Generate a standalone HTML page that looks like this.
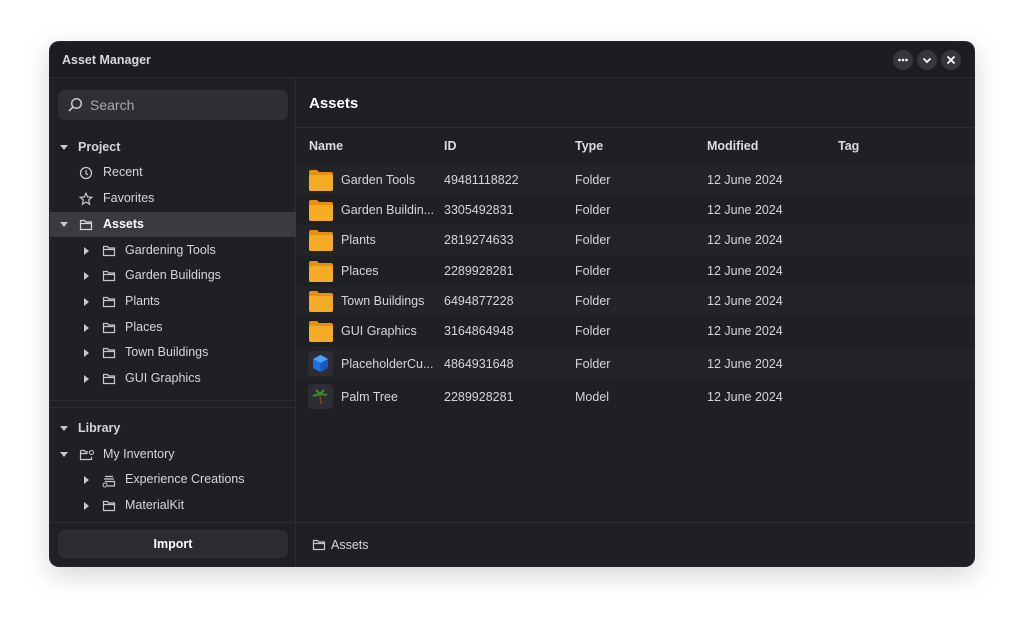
<!DOCTYPE html>
<html><head><meta charset="utf-8"><style>
*{box-sizing:border-box;margin:0;padding:0}
body{width:1024px;height:625px;background:#fff;font-family:"Liberation Sans",sans-serif;position:relative;overflow:hidden}
.win{position:absolute;left:50px;top:42px;width:924px;height:524px;background:#1f2023;border-radius:9px;overflow:hidden;box-shadow:0 8px 28px rgba(0,0,0,.18),0 0 0 1px #2a2b2f}
.title{position:absolute;left:0;top:0;width:924px;height:36px;background:#1c1d20;border-bottom:1px solid #2c2d31;color:#d8d8da;font-size:12.5px;font-weight:bold;padding:11px 0 0 12px}
.tb{position:absolute;top:8px;width:20px;height:20px;border-radius:10px;background:#36373b}
.side{position:absolute;left:0;top:37px;width:246px;height:487px;border-right:1px solid #2c2d31}
.search{position:absolute;left:8px;top:11px;width:230px;height:30px;border-radius:7px;background:#2e3035;color:#a8a9ad;font-size:14px;padding:7px 0 0 32px}
.it{position:absolute;left:0;width:246px;height:25px;color:#d6d6d8;font-size:12.5px;line-height:25px}
.it.sel{background:#3a3b3f;color:#fff;font-weight:bold}
.tri{position:absolute;width:0;height:0}
.td{border-left:4px solid transparent;border-right:4px solid transparent;border-top:5px solid #c8c8ca;top:10px}
.tr{border-top:4px solid transparent;border-bottom:4px solid transparent;border-left:5px solid #c8c8ca;top:9px}
.ic{position:absolute;top:6px}
.hdr{position:absolute;left:246px;top:37px;width:678px;height:49px;border-bottom:1px solid #2c2d31;color:#fff;font-size:15px;font-weight:bold;padding:16px 0 0 13px}
.col{position:absolute;top:97px;color:#dcdcde;font-size:12.5px;font-weight:bold}
.row{position:absolute;left:246px;width:678px;color:#d6d6d8;font-size:12.5px}
.row span{position:absolute}
.foot{position:absolute;top:480px;height:1px;background:#2c2d31}
</style></head><body>
<div class="win">
<div class="title">Asset Manager</div>
<div class="tb" style="left:843px"><svg width="20" height="20"><circle cx="6.5" cy="10" r="1.3" fill="#fff"/><circle cx="10" cy="10" r="1.3" fill="#fff"/><circle cx="13.5" cy="10" r="1.3" fill="#fff"/></svg></div>
<div class="tb" style="left:867px"><svg width="20" height="20"><path d="M6.5 8.5 10 12 13.5 8.5" stroke="#fff" stroke-width="1.8" fill="none"/></svg></div>
<div class="tb" style="left:891px"><svg width="20" height="20"><path d="M6.5 6.5 13.5 13.5M13.5 6.5 6.5 13.5" stroke="#fff" stroke-width="1.8"/></svg></div>

<div class="side">
<div class="search"><svg style="position:absolute;left:9px;top:7px" width="16" height="16"><circle cx="9.5" cy="6.5" r="4.8" stroke="#c8c8ca" stroke-width="1.5" fill="none"/><path d="M6 10 2 14" stroke="#c8c8ca" stroke-width="1.6"/></svg>Search</div>
<div class="it" style="top:56px"><i class="tri td" style="left:10px"></i><span style="position:absolute;left:28px;font-weight:bold">Project</span></div>
<div class="it" style="top:81px"><svg class="ic" style="left:29px" width="14" height="14"><circle cx="7" cy="7" r="5.5" stroke="#c8c8ca" stroke-width="1.3" fill="none"/><path d="M7 4v3.5l2 1.3" stroke="#c8c8ca" stroke-width="1.3" fill="none"/></svg><span style="position:absolute;left:53px">Recent</span></div>
<div class="it" style="top:107px"><svg class="ic" style="left:29px" width="14" height="14"><path d="M7 1.2 8.7 5 12.8 5.3 9.7 8 10.6 12.2 7 10 3.4 12.2 4.3 8 1.2 5.3 5.3 5Z" stroke="#c8c8ca" stroke-width="1.2" fill="none"/></svg><span style="position:absolute;left:53px">Favorites</span></div>
<div class="it sel" style="top:133px"><i class="tri td" style="left:10px"></i><svg class="ic" style="left:29px" width="14" height="14"><path d="M1.5 2.5h4l1.2 1.5h5.8v7.5h-11zM1.5 5.5h11" stroke="#d8d8da" stroke-width="1.2" fill="none"/></svg><span style="position:absolute;left:53px">Assets</span></div>
<div class="it" style="top:159px"><i class="tri tr" style="left:34px"></i><svg class="ic" style="left:52px" width="14" height="14"><path d="M1.5 2.5h4l1.2 1.5h5.8v7.5h-11zM1.5 5.5h11" stroke="#c8c8ca" stroke-width="1.2" fill="none"/></svg><span style="position:absolute;left:75px">Gardening Tools</span></div>
<div class="it" style="top:184px"><i class="tri tr" style="left:34px"></i><svg class="ic" style="left:52px" width="14" height="14"><path d="M1.5 2.5h4l1.2 1.5h5.8v7.5h-11zM1.5 5.5h11" stroke="#c8c8ca" stroke-width="1.2" fill="none"/></svg><span style="position:absolute;left:75px">Garden Buildings</span></div>
<div class="it" style="top:210px"><i class="tri tr" style="left:34px"></i><svg class="ic" style="left:52px" width="14" height="14"><path d="M1.5 2.5h4l1.2 1.5h5.8v7.5h-11zM1.5 5.5h11" stroke="#c8c8ca" stroke-width="1.2" fill="none"/></svg><span style="position:absolute;left:75px">Plants</span></div>
<div class="it" style="top:236px"><i class="tri tr" style="left:34px"></i><svg class="ic" style="left:52px" width="14" height="14"><path d="M1.5 2.5h4l1.2 1.5h5.8v7.5h-11zM1.5 5.5h11" stroke="#c8c8ca" stroke-width="1.2" fill="none"/></svg><span style="position:absolute;left:75px">Places</span></div>
<div class="it" style="top:261px"><i class="tri tr" style="left:34px"></i><svg class="ic" style="left:52px" width="14" height="14"><path d="M1.5 2.5h4l1.2 1.5h5.8v7.5h-11zM1.5 5.5h11" stroke="#c8c8ca" stroke-width="1.2" fill="none"/></svg><span style="position:absolute;left:75px">Town Buildings</span></div>
<div class="it" style="top:287px"><i class="tri tr" style="left:34px"></i><svg class="ic" style="left:52px" width="14" height="14"><path d="M1.5 2.5h4l1.2 1.5h5.8v7.5h-11zM1.5 5.5h11" stroke="#c8c8ca" stroke-width="1.2" fill="none"/></svg><span style="position:absolute;left:75px">GUI Graphics</span></div>
<div style="position:absolute;left:0;top:321px;width:246px;height:1px;background:#2c2d31"></div>
<div style="position:absolute;left:0;top:328px;width:246px;height:1px;background:#2c2d31"></div>
<div class="it" style="top:337px"><i class="tri td" style="left:10px"></i><span style="position:absolute;left:28px;font-weight:bold">Library</span></div>
<div class="it" style="top:363px"><i class="tri td" style="left:10px"></i><svg class="ic" style="left:29px" width="16" height="14"><path d="M1.5 2.5h4l1.2 1.5h2.5M12.5 9v2.5h-11v-9M1.5 5.5h7" stroke="#c8c8ca" stroke-width="1.2" fill="none"/><circle cx="12.5" cy="4.5" r="2" stroke="#c8c8ca" stroke-width="1.1" fill="none"/></svg><span style="position:absolute;left:53px">My Inventory</span></div>
<div class="it" style="top:388px"><i class="tri tr" style="left:34px"></i><svg class="ic" style="left:51px" width="16" height="15"><path d="M4 3.5h8M3 6h10M4 8.5h9.5v4.5h-7" stroke="#c8c8ca" stroke-width="1.2" fill="none"/><circle cx="4" cy="12" r="2" stroke="#c8c8ca" stroke-width="1.1" fill="none"/></svg><span style="position:absolute;left:75px">Experience Creations</span></div>
<div class="it" style="top:414px"><i class="tri tr" style="left:34px"></i><svg class="ic" style="left:52px" width="14" height="14"><path d="M1.5 2.5h4l1.2 1.5h5.8v7.5h-11zM1.5 5.5h11" stroke="#c8c8ca" stroke-width="1.2" fill="none"/></svg><span style="position:absolute;left:75px">MaterialKit</span></div>
<div class="foot" style="left:0;width:246px;top:443px"></div>
<div style="position:absolute;left:8px;top:451px;width:230px;height:28px;border-radius:7px;background:#2b2c30;color:#fff;font-size:12.5px;font-weight:bold;text-align:center;line-height:28px">Import</div>
</div>

<div class="hdr">Assets</div>
<div class="col" style="left:259px">Name</div>
<div class="col" style="left:394px">ID</div>
<div class="col" style="left:525px">Type</div>
<div class="col" style="left:657px">Modified</div>
<div class="col" style="left:788px">Tag</div>

<div class="foot" style="left:246px;width:678px;top:480px"></div>
<svg style="position:absolute;left:262px;top:496px" width="14" height="14"><path d="M1.5 2.5h4l1.2 1.5h5.8v7.5h-11zM1.5 5.5h11" stroke="#c8c8ca" stroke-width="1.2" fill="none"/></svg>
<div style="position:absolute;left:281px;top:496px;color:#d6d6d8;font-size:12.5px">Assets</div>

<div class="row" style="top:123px;height:30px;background:#232428"><svg style="position:absolute;left:12px;top:3px" width="26" height="24"><path d="M1 4a2 2 0 0 1 2-2h6l2 2h12a2 2 0 0 1 2 2v15a2 2 0 0 1-2 2H3a2 2 0 0 1-2-2z" fill="#e58f13"/><rect x="1" y="7" width="24" height="16" rx="2" fill="#f6ab25"/></svg><span style="left:45px;top:8px">Garden Tools</span><span style="left:148px;top:8px">49481118822</span><span style="left:279px;top:8px">Folder</span><span style="left:411px;top:8px">12 June 2024</span></div>
<div class="row" style="top:153px;height:30px"><svg style="position:absolute;left:12px;top:3px" width="26" height="24"><path d="M1 4a2 2 0 0 1 2-2h6l2 2h12a2 2 0 0 1 2 2v15a2 2 0 0 1-2 2H3a2 2 0 0 1-2-2z" fill="#e58f13"/><rect x="1" y="7" width="24" height="16" rx="2" fill="#f6ab25"/></svg><span style="left:45px;top:8px">Garden Buildin...</span><span style="left:148px;top:8px">3305492831</span><span style="left:279px;top:8px">Folder</span><span style="left:411px;top:8px">12 June 2024</span></div>
<div class="row" style="top:183px;height:31px;background:#232428"><svg style="position:absolute;left:12px;top:3px" width="26" height="24"><path d="M1 4a2 2 0 0 1 2-2h6l2 2h12a2 2 0 0 1 2 2v15a2 2 0 0 1-2 2H3a2 2 0 0 1-2-2z" fill="#e58f13"/><rect x="1" y="7" width="24" height="16" rx="2" fill="#f6ab25"/></svg><span style="left:45px;top:8px">Plants</span><span style="left:148px;top:8px">2819274633</span><span style="left:279px;top:8px">Folder</span><span style="left:411px;top:8px">12 June 2024</span></div>
<div class="row" style="top:214px;height:30px"><svg style="position:absolute;left:12px;top:3px" width="26" height="24"><path d="M1 4a2 2 0 0 1 2-2h6l2 2h12a2 2 0 0 1 2 2v15a2 2 0 0 1-2 2H3a2 2 0 0 1-2-2z" fill="#e58f13"/><rect x="1" y="7" width="24" height="16" rx="2" fill="#f6ab25"/></svg><span style="left:45px;top:8px">Places</span><span style="left:148px;top:8px">2289928281</span><span style="left:279px;top:8px">Folder</span><span style="left:411px;top:8px">12 June 2024</span></div>
<div class="row" style="top:244px;height:30px;background:#232428"><svg style="position:absolute;left:12px;top:3px" width="26" height="24"><path d="M1 4a2 2 0 0 1 2-2h6l2 2h12a2 2 0 0 1 2 2v15a2 2 0 0 1-2 2H3a2 2 0 0 1-2-2z" fill="#e58f13"/><rect x="1" y="7" width="24" height="16" rx="2" fill="#f6ab25"/></svg><span style="left:45px;top:8px">Town Buildings</span><span style="left:148px;top:8px">6494877228</span><span style="left:279px;top:8px">Folder</span><span style="left:411px;top:8px">12 June 2024</span></div>
<div class="row" style="top:274px;height:31px"><svg style="position:absolute;left:12px;top:3px" width="26" height="24"><path d="M1 4a2 2 0 0 1 2-2h6l2 2h12a2 2 0 0 1 2 2v15a2 2 0 0 1-2 2H3a2 2 0 0 1-2-2z" fill="#e58f13"/><rect x="1" y="7" width="24" height="16" rx="2" fill="#f6ab25"/></svg><span style="left:45px;top:8px">GUI Graphics</span><span style="left:148px;top:8px">3164864948</span><span style="left:279px;top:8px">Folder</span><span style="left:411px;top:8px">12 June 2024</span></div>
<div class="row" style="top:305px;height:33px;background:#232428"><div style="position:absolute;left:12px;top:4px;width:25px;height:25px;border-radius:4px;background:#2c2e33"></div><svg style="position:absolute;left:14px;top:6px" width="21" height="21"><path d="M10.5 2 18 6v9l-7.5 4L3 15V6z" fill="#1f6fe0"/><path d="M10.5 2 18 6l-7.5 4L3 6z" fill="#4aa3ff"/><path d="M10.5 10 18 6v9l-7.5 4z" fill="#1657c0"/></svg><span style="left:45px;top:10px">PlaceholderCu...</span><span style="left:148px;top:10px">4864931648</span><span style="left:279px;top:10px">Folder</span><span style="left:411px;top:10px">12 June 2024</span></div>
<div class="row" style="top:338px;height:33px"><div style="position:absolute;left:12px;top:4px;width:25px;height:25px;border-radius:4px;background:#2c2e33"></div><svg style="position:absolute;left:14px;top:6px" width="21" height="21"><path d="M10 8l1 10" stroke="#6b4a2a" stroke-width="1.6"/><path d="M10 8 3 10M10 8 17 9M10 8 6 4M10 8 14 4" stroke="#3f8a2f" stroke-width="2" fill="none"/></svg><span style="left:45px;top:10px">Palm Tree</span><span style="left:148px;top:10px">2289928281</span><span style="left:279px;top:10px">Model</span><span style="left:411px;top:10px">12 June 2024</span></div>
</div>
</body></html>
